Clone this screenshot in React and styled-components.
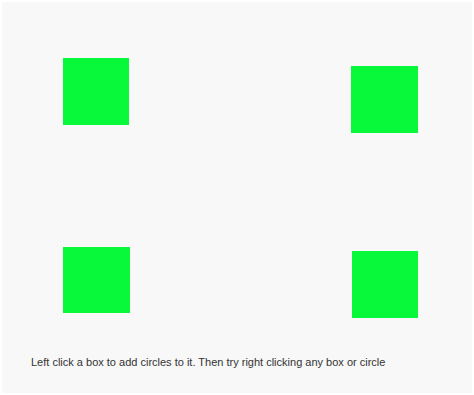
import React from "react";
import styled, { createGlobalStyle } from "styled-components";

const Global = createGlobalStyle`
  html, body { margin: 0; padding: 0; background: #ffffff; }
  body { font-family: "Liberation Sans", Arial, sans-serif; }
`;

const Stage = styled.div`
  margin: 2px 2px 0 2px;
  height: 391px;
  background: #f8f8f8;
  display: flex;
  flex-direction: column;
`;

const Canvas = styled.div`
  position: relative;
  height: 352px;
`;

const Box = styled.div`
  position: absolute;
  width: ${(p) => p.$w}px;
  height: ${(p) => p.$h}px;
  background: #08f83a;
`;

const Hint = styled.p`
  margin: 0;
  padding-left: 29px;
  font-size: 11px;
  line-height: 16px;
  color: #333333;
`;

const boxes = [
  { x: 61, y: 56, w: 66, h: 67 },
  { x: 349, y: 64, w: 67, h: 67 },
  { x: 61, y: 245, w: 67, h: 66 },
  { x: 350, y: 249, w: 66, h: 67 },
];

export default function App() {
  return (
    <>
      <Global />
      <Stage>
        <Canvas>
          {boxes.map((b, i) => (
            <Box key={i} $w={b.w} $h={b.h} style={{ left: b.x, top: b.y }} />
          ))}
        </Canvas>
        <Hint>Left click a box to add circles to it. Then try right clicking any box or circle</Hint>
      </Stage>
    </>
  );
}
